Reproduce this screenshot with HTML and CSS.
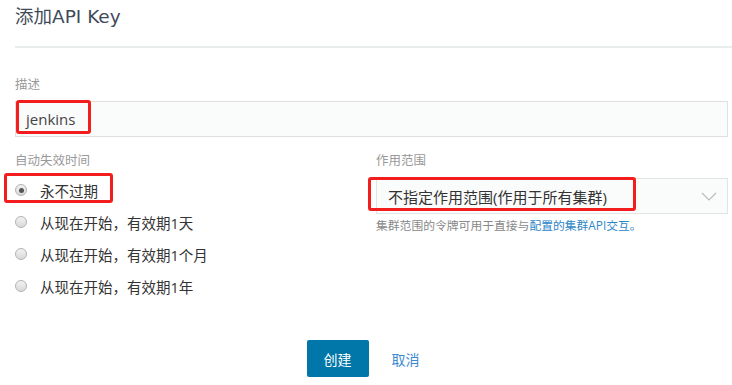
FILE: index.html
```html
<!DOCTYPE html>
<html lang="zh">
<head>
<meta charset="utf-8">
<title>添加API Key</title>
<link rel="stylesheet" href="styles.css">
</head>
<body>
<div class="page">
  <div class="header">
    <h1 class="title">添加API Key</h1>
  </div>
  <div class="content">
    <div class="field">
      <div class="label">描述</div>
      <div class="input-wrap">
        <div class="input">jenkins</div>
        <span class="mark mark-input"></span>
      </div>
    </div>
    <div class="cols">
      <div class="col">
        <div class="label">自动失效时间</div>
        <div class="radios">
          <label class="radio"><span class="dot checked"></span><span>永不过期</span></label>
          <label class="radio"><span class="dot"></span><span>从现在开始，有效期1天</span></label>
          <label class="radio"><span class="dot"></span><span>从现在开始，有效期1个月</span></label>
          <label class="radio"><span class="dot"></span><span>从现在开始，有效期1年</span></label>
          <span class="mark mark-radio"></span>
        </div>
      </div>
      <div class="col">
        <div class="label">作用范围</div>
        <div class="select-wrap">
          <div class="select">
            <span>不指定作用范围(作用于所有集群)</span>
            <svg class="chev" width="16" height="9" viewBox="0 0 16 9"><path d="M1 1 L8 8 L15 1" fill="none" stroke="#b8bcbf" stroke-width="1.2"/></svg>
          </div>
          <span class="mark mark-select"></span>
        </div>
        <div class="help">集群范围的令牌可用于直接与<span class="link">配置的集群API交互。</span></div>
      </div>
    </div>
    <div class="actions">
      <button class="btn btn-primary">创建</button>
      <button class="btn btn-link">取消</button>
    </div>
  </div>
</div>
</body>
</html>
```
FILE: styles.css
```css
* { box-sizing: border-box; }
html, body { margin: 0; padding: 0; background: #fff; }
body {
  font-family: "Open Sans", "Noto Sans CJK SC", sans-serif;
  color: #333;
  width: 732px;
  height: 385px;
  overflow: hidden;
}
.header {
  margin-left: 15px;
  height: 48px;
  border-bottom: 2px solid #e9eded;
  padding-top: 6px;
}
.title {
  margin: 0;
  font-family: "DejaVu Sans", "Noto Sans CJK SC", sans-serif;
  font-size: 18.5px;
  font-weight: 400;
  line-height: 22px;
  color: #3f4a5a;
}
.content {
  padding: 0 4px 0 15px;
}
.field { margin-top: 29px; }
.label {
  font-size: 12.5px;
  line-height: 16px;
  color: #999;
}
.input-wrap { position: relative; margin-top: 8px; }
.input {
  height: 36px;
  border: 1px solid #dfe1e1;
  background: #fafbfb;
  padding-left: 10px;
  font-size: 15px;
  line-height: 34px;
  color: #444;
}
.cols {
  display: grid;
  grid-template-columns: 346px 1fr;
  column-gap: 15px;
  margin-top: 16px;
}
.radios { position: relative; margin-top: 5px; }
.radio {
  display: flex;
  align-items: center;
  height: 32px;
  font-size: 14.5px;
  color: #333;
}
.dot {
  width: 12px;
  height: 12px;
  border-radius: 50%;
  border: 1px solid #b3b3b3;
  background: linear-gradient(#f2f2f2, #d9d9d9);
  margin-right: 13px;
  position: relative;
}
.dot.checked::after {
  content: "";
  position: absolute;
  left: 2.5px;
  top: 2.5px;
  width: 5px;
  height: 5px;
  border-radius: 50%;
  background: #555;
}
.select-wrap { position: relative; margin-top: 9px; }
.select {
  height: 36px;
  border: 1px solid #e3e5e5;
  background: #fafbfb;
  display: flex;
  align-items: center;
  justify-content: space-between;
  padding: 0 10px 0 11px;
  font-size: 15px;
  color: #333;
}
.chev { display: block; }
.help {
  margin-top: 3px;
  font-size: 11.8px;
  line-height: 16px;
  color: #888;
}
.link { color: #2d86c8; }
.mark {
  position: absolute;
  border: 3px solid #f41d1d;
  border-radius: 3px;
  pointer-events: none;
}
.mark-input { left: 1px; top: -1px; width: 75px; height: 34px; }
.mark-radio { left: -11px; top: -1px; width: 109px; height: 30px; }
.mark-select { left: -8px; top: -1px; width: 268px; height: 34px; }
.actions {
  display: flex;
  justify-content: center;
  gap: 6px;
  margin-top: 38px;
}
.btn {
  width: 62px;
  height: 37px;
  border: none;
  border-radius: 2px;
  font-family: "Open Sans", "Noto Sans CJK SC", sans-serif;
  font-size: 14px;
  cursor: pointer;
}
.btn-primary { background: #0077a8; color: #fff; }
.btn-link { background: transparent; color: #3a8ad0; }
```
